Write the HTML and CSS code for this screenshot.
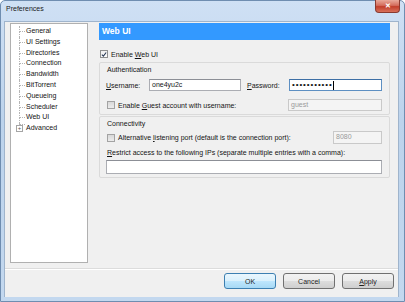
FILE: index.html
```html
<!DOCTYPE html>
<html>
<head>
    <title>Preferences</title>
    <link rel="stylesheet" href="styles.css">
</head>
<body>
    <div class="window">
        <div class="titlebar">
            <span class="title">Preferences</span>
            <span class="close">&#x2715;</span>
        </div>

        <div class="client">
            <div class="main">
                <ul class="tree">
                    <li>General</li>
                    <li>UI Settings</li>
                    <li>Directories</li>
                    <li>Connection</li>
                    <li>Bandwidth</li>
                    <li>BitTorrent</li>
                    <li>Queueing</li>
                    <li>Scheduler</li>
                    <li>Web UI</li>
                    <li class="last"><span class="expander">+</span>Advanced</li>
                </ul>

                <div class="page">
                    <div class="page-header">Web UI</div>

                    <div class="check-row top-check">
                        <span class="box checked">
                            <svg width="7" height="7" viewBox="0 0 7 7"><path d="M1 3.6 L2.8 5.4 L6 1.2" fill="none" stroke="#2a3b57" stroke-width="1.3"/></svg>
                        </span>
                        <span>Enable <u>W</u>eb UI</span>
                    </div>

                    <div class="group auth">
                        <div class="group-title">Authentication</div>
                        <div class="row cred-row">
                            <span class="field-label"><u>U</u>sername:</span>
                            <span class="input user">one4yu2c</span>
                            <span class="field-label pass-label"><u>P</u>assword:</span>
                            <span class="input pass focused"><span class="dots">&#8226;&#8226;&#8226;&#8226;&#8226;&#8226;&#8226;&#8226;&#8226;&#8226;&#8226;</span><span class="caret"></span></span>
                        </div>
                        <div class="row guest-row">
                            <span class="box"></span>
                            <span>Enable <u>G</u>uest account with username:</span>
                            <span class="input disabled guest">guest</span>
                        </div>
                    </div>

                    <div class="group conn">
                        <div class="group-title">Connectivity</div>
                        <div class="row port-row">
                            <span class="box"></span>
                            <span>Alternative <u>l</u>istening port (default is the connection port):</span>
                            <span class="input disabled port">8080</span>
                        </div>
                        <div class="row ip-label"><span><u>R</u>estrict access to the following IPs (separate multiple entries with a comma):</span></div>
                        <div class="input ips"></div>
                    </div>
                </div>
            </div>

            <div class="separator"></div>

            <div class="buttons">
                <button class="btn default">OK</button>
                <button class="btn">Cancel</button>
                <button class="btn"><u>A</u>pply</button>
            </div>
        </div>
    </div>
</body>
</html>
```

FILE: styles.css
```css
body {
    margin: 0;
    font-family: "Liberation Sans", Arial, sans-serif;
    font-size: 7px;
    color: #141414;
    background-color: #fff;
}

.window {
    width: 405px;
    height: 302px;
    box-sizing: border-box;
    background: linear-gradient(to bottom, #cfe0f4, #bcd3ec 40%, #c3d8ef);
    border: 1px solid #6f8db0;
    border-radius: 5px 5px 0 0;
    display: flex;
    flex-direction: column;
}

.titlebar {
    height: 20px;
    display: flex;
    align-items: flex-start;
    padding-left: 5px;
    padding-right: 4px;
}

.title {
    padding-top: 3px;
    line-height: 10px;
    font-size: 7px;
    color: #1a1a1a;
}

.close {
    margin-left: auto;
    width: 25px;
    height: 13px;
    box-sizing: border-box;
    margin-top: -1px;
    border: 1px solid #8a3a2f;
    border-top: none;
    border-radius: 0 0 4px 4px;
    background: linear-gradient(to bottom, #e9a99a, #d46d5c 45%, #c23f2b 55%, #d8705a);
    color: #fff;
    font-size: 7px;
    font-weight: bold;
    line-height: 12px;
    text-align: center;
}

.client {
    height: 275px;
    margin: 0 5px 0 3px;
    border: 1px solid #9fb4cc;
    border-bottom: none;
    background-color: #f0f0f0;
    display: flex;
    flex-direction: column;
}

.main {
    display: flex;
    padding: 1px 8px 0 5px;
}

.tree {
    list-style: none;
    margin: 0;
    padding: 2px 0 0 0;
    width: 80px;
    height: 240px;
    box-sizing: border-box;
    border: 1px solid #b0b0b0;
    background-color: #fff;
}

.tree li {
    position: relative;
    height: 10.8px;
    line-height: 10.8px;
    padding-left: 15px;
    white-space: nowrap;
}

.tree li::before {
    content: "";
    position: absolute;
    left: 8px;
    top: 0;
    width: 5px;
    height: 5px;
    border-left: 1px dotted #b4b4b4;
    border-bottom: 1px dotted #b4b4b4;
}

.tree li::after {
    content: "";
    position: absolute;
    left: 8px;
    top: 6px;
    height: 5px;
    border-left: 1px dotted #b4b4b4;
}

.tree li.last::after {
    display: none;
}

.tree li.last::before {
    height: 1px;
}

.expander {
    position: absolute;
    left: 5px;
    top: 2px;
    width: 7px;
    height: 7px;
    box-sizing: border-box;
    border: 1px solid #a5a5a5;
    background-color: #fff;
    color: #555;
    font-size: 6px;
    line-height: 5px;
    text-align: center;
    z-index: 1;
}

.page {
    flex: 1;
    margin-left: 11px;
    display: flex;
    flex-direction: column;
}

.page-header {
    height: 17px;
    line-height: 17px;
    padding-left: 3px;
    background-color: #3399ff;
    color: #fff;
    font-weight: bold;
    font-size: 8.5px;
}

.check-row, .row {
    display: flex;
    align-items: center;
    gap: 3px;
    white-space: nowrap;
}

.top-check {
    height: 10px;
    margin-top: 9px;
    padding-left: 1px;
}

.box {
    width: 8px;
    height: 8px;
    box-sizing: border-box;
    border: 1px solid #a3a3a3;
    background: linear-gradient(to bottom, #d8d8d8, #ececec);
    flex: none;
    display: flex;
    align-items: center;
    justify-content: center;
}

.box.checked {
    background: linear-gradient(to bottom, #f0f0f0, #fdfdfd);
    border-color: #8e8f8f;
}

.box svg {
    display: block;
}

.group {
    border: 1px solid #dadada;
    border-radius: 2px;
    padding: 2px 7px 3px 6px;
}

.auth {
    margin-top: 3px;
}

.conn {
    margin-top: 1px;
}

.group-title {
    line-height: 10px;
    padding-left: 1px;
}

.input {
    height: 12px;
    line-height: 10px;
    box-sizing: border-box;
    border: 1px solid #abadb3;
    border-top-color: #8c8f96;
    background-color: #fff;
    padding-left: 2px;
    flex: none;
}

.input.disabled {
    background-color: #f4f4f4;
    border-color: #c9c9c9;
    color: #9a9a9a;
}

.cred-row {
    margin-top: 4px;
    gap: 0;
}

.field-label {
    width: 43px;
}

.pass-label {
    width: 42px;
    margin-left: 6px;
}

.input.user {
    width: 92px;
}

.input.pass {
    width: 93px;
    display: flex;
    align-items: center;
}

.input.focused {
    border-color: #5d8fc2;
    border-top-color: #3d6fa5;
}

.dots {
    font-size: 8px;
    letter-spacing: 0.9px;
    line-height: 8px;
}

.caret {
    width: 1px;
    height: 9px;
    background-color: #000;
}

.guest-row {
    margin-top: 8px;
    padding-left: 1px;
}

.input.guest {
    width: 94px;
    margin-left: auto;
}

.port-row {
    margin-top: 2px;
    padding-left: 1px;
}

.input.port {
    width: 49px;
    height: 13px;
    margin-left: auto;
}

.ip-label {
    margin-top: 4px;
    line-height: 10px;
    padding-left: 1px;
}

.input.ips {
    height: 14px;
    margin-top: 2px;
}

.separator {
    margin-top: 5px;
    height: 1px;
    background-color: #dcdcdc;
    border-bottom: 1px solid #fff;
}

.buttons {
    display: flex;
    justify-content: flex-end;
    gap: 7px;
    margin-top: 3px;
    padding-right: 4px;
}

.btn {
    width: 52px;
    height: 16px;
    padding: 0;
    font-family: inherit;
    font-size: 7px;
    color: #1e1e1e;
    border: 1px solid #707070;
    border-radius: 3px;
    background: linear-gradient(to bottom, #f2f2f2, #ebebeb 50%, #dddddd 51%, #cfcfcf);
}

.btn.default {
    border-color: #3c7fb1;
    background: linear-gradient(to bottom, #eaf6fd, #d9f0fc 50%, #bee6fd 51%, #a7d9f5);
}
```
